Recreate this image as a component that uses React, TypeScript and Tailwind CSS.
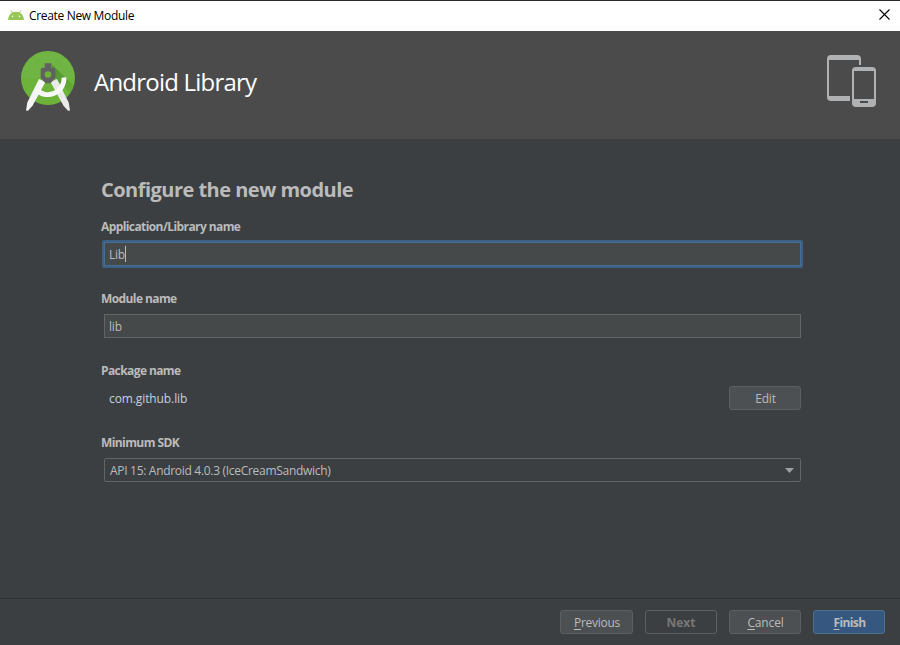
import { useState } from 'react';
import type { ReactNode } from 'react';

function AndroidHead() {
  return (
    <svg className="mb-[2px] ml-2 h-[10px] w-4 shrink-0" viewBox="0 0 16 10">
      <path d="M0 10C.2 6.500 1.800 3.900 4.200 2.600L2.500.5l.5-.4L5 2.200C6.900 1.500 9.100 1.500 11 2.200L13 .1l.5.4-1.700 2.100C14.200 3.900 15.800 6.500 16 10z" fill="#97c756" />
      <circle cx="4.500" cy="6.300" r=".8" fill="#fff" />
      <circle cx="11.500" cy="6.300" r=".8" fill="#fff" />
    </svg>
  );
}

function StudioLogo() {
  return (
    <svg className="h-[80px] w-[80px] shrink-0" viewBox="0 0 80 80">
      <defs>
        <clipPath id="disc">
          <circle cx="38" cy="38" r="27" />
        </clipPath>
        <linearGradient id="shade" x1="0" y1="0" x2="1" y2="1">
          <stop offset="0" stopColor="#3f7d28" stopOpacity=".75" />
          <stop offset="1" stopColor="#4b8a2c" stopOpacity=".1" />
        </linearGradient>
      </defs>
      <g clipPath="url(#disc)">
        <rect x="11" y="11" width="54" height="27" fill="#70b544" />
        <rect x="11" y="38" width="54" height="27" fill="#6db33a" />
        <path d="M41.500 24L66 48V58L45 38z" fill="url(#shade)" />
      </g>
      <path d="M29 39L17.300 62.500 16 70.500l2 .3 4.500-5L35.500 42z" fill="#f5f5f5" />
      <path d="M47 39L58.700 62.500l1.300 8-2 .3-4.500-5L40.500 42z" fill="#eaeaea" />
      <path d="M54 37.500A16.200 16.200 0 0 1 26 49.500" fill="none" stroke="#f8f8f8" strokeWidth="4.800" />
      <path d="M34.700 23.300h6.600v4.400h2q2 0 2 2V38L40.500 43.300h-5L30.700 38v-8.300q0-2 2-2h2z" fill="#616161" />
      <circle cx="38" cy="34.500" r="3.300" fill="#6db33a" />
    </svg>
  );
}

function Devices() {
  return (
    <svg className="h-[52px] w-[49px] shrink-0" viewBox="0 0 49 52">
      <path fillRule="evenodd" d="M4 0H30Q34 0 34 4V10H32V5H2V41H23V46H4Q0 46 0 42V4Q0 0 4 0z" fill="#afb1b3" />
      <path fillRule="evenodd" d="M29 12H45Q49 12 49 16V48Q49 52 45 52H29Q25 52 25 48V16Q25 12 29 12zM27 16V44H47V16zM33 46V48H41V46z" fill="#afb1b3" />
    </svg>
  );
}

function Field({ label, children }: { label: string; children: ReactNode }) {
  return (
    <div className="h-[72px]">
      <div className="h-[18px] text-[12px] leading-[18px] font-bold tracking-[-0.59px] whitespace-nowrap">{label}</div>
      {children}
    </div>
  );
}

const buttonBase = 'h-6 rounded-[3px] border text-[12px] leading-[23px] text-center whitespace-nowrap';

export default function App() {
  const [name, setName] = useState('Lib');
  const [moduleName, setModuleName] = useState('lib');

  return (
    <div className="flex h-[645px] w-[900px] flex-col overflow-hidden bg-[#3c3f41] font-['Open_Sans','Noto_Sans',sans-serif] text-[#bbbbbb]">
      {/* Title bar */}
      <div className="flex h-[31px] shrink-0 items-center border-t border-[#2b2b2b] bg-white">
        <AndroidHead />
        <span className="ml-[5px] text-[12px] leading-[18px] tracking-[-0.33px] text-black">Create New Module</span>
        <svg className="mr-[10px] mb-[3px] ml-auto h-[11px] w-[11px]" viewBox="0 0 11 11">
          <path d="M.5.5l10 10M10.500.5l-10 10" stroke="#000" strokeWidth="1.100" />
        </svg>
      </div>

      {/* Header */}
      <div className="flex h-[108px] shrink-0 bg-[#4b4b4b] pr-6">
        <div className="mt-[9px] ml-[10px]">
          <StudioLogo />
        </div>
        <h1 className="mt-[33px] ml-1 text-[24px] leading-[36px] tracking-[-0.78px] text-white">Android Library</h1>
        <div className="mt-[24px] ml-auto">
          <Devices />
        </div>
      </div>

      {/* Form */}
      <div className="flex-1 pt-[36px] pr-[99px] pl-[101px]">
        <h2 className="mb-[13px] h-[30px] text-[20px] leading-[30px] font-bold tracking-[-0.52px]">Configure the new module</h2>
        <Field label="Application/Library name">
          <div className="relative mt-[4px] ml-[1px] w-[701px] rounded-[2px] border-2 border-[#3d6185]">
            <input
              className="block h-6 w-full border border-[#466d94] bg-[#45494a] pl-1 text-[12px] tracking-[-0.3px] outline-none"
              value={name}
              onChange={(e) => setName(e.target.value)}
            />
            <span className="absolute top-1 left-[21px] h-4 w-px bg-[#bbbbbb]" />
          </div>
        </Field>
        <Field label="Module name">
          <input
            className="mt-[6px] ml-[3px] block h-6 w-[697px] border border-[#646464] bg-[#45494a] pl-1 text-[12px] tracking-[-0.2px] outline-none"
            value={moduleName}
            onChange={(e) => setModuleName(e.target.value)}
          />
        </Field>
        <Field label="Package name">
          <div className="mt-[6px] ml-2 flex w-[692px] justify-between">
            <span className="text-[12px] leading-[26px] tracking-[-0.1px] text-[#c5d0e0]">com.github.lib</span>
            <button className={`${buttonBase} w-[72px] border-[#5e6060] bg-[#4c5052] pl-px tracking-[-0.2px]`}>Edit</button>
          </div>
        </Field>
        <Field label="Minimum SDK">
          <div className="mt-[6px] ml-[3px] flex h-6 w-[697px] items-center justify-between rounded-[2px] border border-[#646464] pr-[6px] pl-[5px]">
            <span className="pt-[2px] text-[12px] leading-5 tracking-[-0.3px]">API 15: Android 4.0.3 (IceCreamSandwich)</span>
            <svg className="h-[5px] w-[9px]" viewBox="0 0 9 5">
              <path d="M0 0h9L4.500 5z" fill="#9da0a2" />
            </svg>
          </div>
        </Field>
      </div>

      {/* Wizard buttons */}
      <div className="flex h-[47px] shrink-0 justify-end gap-3 border-t border-[#323232] pt-[11px] pr-[15px]">
        <button className={`${buttonBase} w-[73px] border-[#5e6060] bg-[#4c5052] pl-px tracking-[-0.25px]`}>
          <u className="underline-offset-2">P</u>revious
        </button>
        <button className={`${buttonBase} w-[72px] border-[#5e6060] font-bold text-[#777777]`}>Next</button>
        <button className={`${buttonBase} w-[72px] border-[#5e6060] bg-[#4c5052] pl-px tracking-[-0.15px]`}>
          <u className="underline-offset-2">C</u>ancel
        </button>
        <button className={`${buttonBase} w-[72px] border-[#4c708c] bg-[#365880] pl-px font-bold tracking-[-0.6px]`}>
          <u className="underline-offset-2">F</u>inish
        </button>
      </div>
    </div>
  );
}
